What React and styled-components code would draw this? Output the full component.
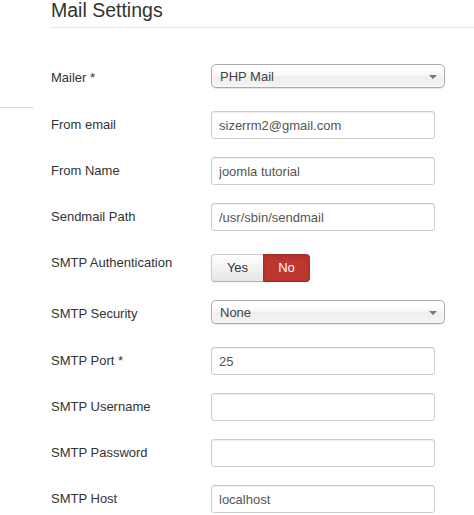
import React from "react";
import styled, { createGlobalStyle } from "styled-components";

const GlobalStyle = createGlobalStyle`
  html, body {
    margin: 0;
    padding: 0;
    background: #fff;
  }
  body {
    font-family: "Liberation Sans", Arial, Helvetica, sans-serif;
    font-size: 13px;
    color: #333;
  }
`;

const Page = styled.div`
  display: flex;
  width: 474px;
  height: 515px;
  overflow: hidden;
`;

const Sidebar = styled.div`
  width: 34px;
  flex-shrink: 0;
  padding-top: 107px;
`;

const SideDivider = styled.div`
  height: 1px;
  background: #dcdcdc;
`;

const Main = styled.div`
  flex: 1;
  margin-left: 16px;
`;

const Title = styled.h2`
  margin: 0 0 36px 0;
  padding: 0 0 7px 1px;
  font-size: 19.5px;
  line-height: 20px;
  font-weight: normal;
  color: #333;
  border-bottom: 1px solid #e5e5e5;
`;

const Group = styled.div`
  display: flex;
  align-items: flex-start;
  margin-bottom: 18px;
  min-height: ${(p) => p.$minHeight || 28}px;
`;

const Label = styled.label`
  width: 160px;
  flex-shrink: 0;
  padding: 5px 0 0 1px;
  line-height: 18px;
  font-size: 13px;
  color: #333;
`;

const Controls = styled.div`
  padding-top: ${(p) => p.$offset || 0}px;
`;

const TextInput = styled.input`
  box-sizing: border-box;
  width: 224px;
  height: 28px;
  padding: 4px 7px;
  border: 1px solid #ccc;
  border-radius: 3px;
  box-shadow: inset 0 1px 1px rgba(0, 0, 0, 0.075);
  font-family: "Liberation Sans", Arial, sans-serif;
  font-size: 13px;
  color: #555;
  background: #fff;
  outline: none;
`;

const Select = styled.div`
  box-sizing: border-box;
  position: relative;
  width: 234px;
  height: 24px;
  padding: 0 8px;
  border: 1px solid #aaa;
  border-radius: 5px;
  background: linear-gradient(#ffffff 20%, #f6f6f6 50%, #eeeeee 52%, #f4f4f4 100%);
  box-shadow: 0 0 3px #fff inset, 0 1px 1px rgba(0, 0, 0, 0.1);
  line-height: 23px;
  font-size: 13px;
  color: #444;
`;

const Caret = styled.span`
  position: absolute;
  right: 7px;
  top: 10px;
  width: 0;
  height: 0;
  border-left: 4px solid transparent;
  border-right: 4px solid transparent;
  border-top: 4px solid #777;
`;

const Toggle = styled.div`
  display: inline-flex;
  height: 28px;
`;

const ToggleButton = styled.button`
  box-sizing: border-box;
  height: 28px;
  width: ${(p) => p.$width}px;
  padding: 0;
  font-family: "Liberation Sans", Arial, sans-serif;
  font-size: 13px;
  line-height: 18px;
  cursor: pointer;
  border: 1px solid ${(p) => (p.$active ? "#a52e28" : "#ccc")};
  border-bottom-color: ${(p) => (p.$active ? "#8f2823" : "#b3b3b3")};
  color: ${(p) => (p.$active ? "#fff" : "#333")};
  background: ${(p) =>
    p.$active
      ? "#bd362f"
      : "linear-gradient(#ffffff, #e6e6e6)"};
  box-shadow: ${(p) =>
    p.$active
      ? "inset 0 2px 4px rgba(0,0,0,0.1)"
      : "inset 0 1px 0 rgba(255,255,255,0.2), 0 1px 2px rgba(0,0,0,0.05)"};
  border-radius: ${(p) => (p.$first ? "4px 0 0 4px" : "0 4px 4px 0")};
  margin-left: ${(p) => (p.$first ? 0 : -1)}px;
`;

const fields = [
  { label: "Mailer *", type: "select", value: "PHP Mail" },
  { label: "From email", type: "text", value: "sizerrm2@gmail.com" },
  { label: "From Name", type: "text", value: "joomla tutorial" },
  { label: "Sendmail Path", type: "text", value: "/usr/sbin/sendmail" },
  { label: "SMTP Authentication", type: "toggle", value: "No" },
  { label: "SMTP Security", type: "select", value: "None" },
  { label: "SMTP Port *", type: "text", value: "25" },
  { label: "SMTP Username", type: "text", value: "" },
  { label: "SMTP Password", type: "password", value: "" },
  { label: "SMTP Host", type: "text", value: "localhost" },
];

function Field({ field }) {
  if (field.type === "select") {
    return (
      <Select>
        {field.value}
        <Caret />
      </Select>
    );
  }
  if (field.type === "toggle") {
    return (
      <Controls $offset={5}>
        <Toggle>
          <ToggleButton $first $width={53} $active={field.value === "Yes"}>
            Yes
          </ToggleButton>
          <ToggleButton $width={47} $active={field.value === "No"}>
            No
          </ToggleButton>
        </Toggle>
      </Controls>
    );
  }
  return (
    <TextInput type={field.type} defaultValue={field.value} readOnly />
  );
}

export default function App() {
  return (
    <>
      <GlobalStyle />
      <Page>
        <Sidebar>
          <SideDivider />
        </Sidebar>
        <Main>
          <Title>Mail Settings</Title>
          {fields.map((f) => (
            <Group key={f.label} $minHeight={f.type === "select" ? 29 : 28}>
              <Label>{f.label}</Label>
              <Field field={f} />
            </Group>
          ))}
        </Main>
      </Page>
    </>
  );
}
